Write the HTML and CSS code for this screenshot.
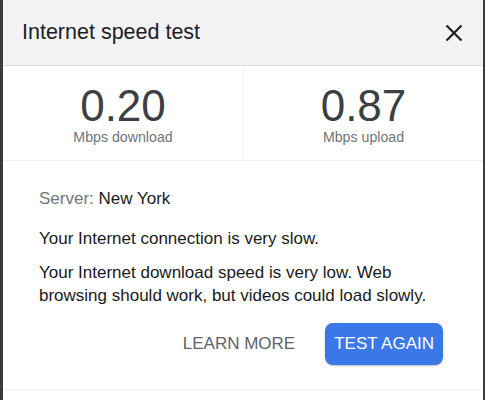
FILE: index.html
```html
<!DOCTYPE html>
<html>
<head>
<meta charset="utf-8">
<link rel="stylesheet" href="styles.css">
</head>
<body>
<div class="dialog">
  <header class="head">
    <h1 class="title">Internet speed test</h1>
    <button class="close" aria-label="Close">
      <svg width="18" height="18" viewBox="0 0 18 18"><path d="M1.5 1.5 L16.5 16.5 M16.5 1.5 L1.5 16.5" stroke="#202124" stroke-width="2.2" fill="none"/></svg>
    </button>
  </header>
  <section class="stats">
    <div class="stat">
      <div class="num">0.20</div>
      <div class="unit">Mbps download</div>
    </div>
    <div class="stat">
      <div class="num">0.87</div>
      <div class="unit">Mbps upload</div>
    </div>
  </section>
  <section class="body">
    <p class="server"><span class="label">Server:</span> New York</p>
    <p class="msg">Your Internet connection is very slow.</p>
    <p class="msg">Your Internet download speed is very low. Web browsing should work, but videos could load slowly.</p>
    <div class="actions">
      <button class="btn-text">LEARN MORE</button>
      <button class="btn-primary">TEST AGAIN</button>
    </div>
  </section>
  <div class="foot"></div>
</div>
</body>
</html>
```

FILE: styles.css
```css
* { box-sizing: border-box; }
html, body { margin: 0; padding: 0; background: #fff; }
body { font-family: "Liberation Sans", Arial, sans-serif; color: #202124; }
.dialog {
  width: 485px;
  height: 400px;
  border-left: 3px solid #3a3a3a;
  border-right: 2px solid #3a3a3a;
  background: #fff;
  display: flex;
  flex-direction: column;
}
.head {
  height: 66px;
  flex: none;
  background: #f1f3f4;
  border-bottom: 1px solid #dadce0;
  display: flex;
  align-items: center;
  justify-content: space-between;
  padding: 0 20px 0 19px;
}
.title {
  margin: 0;
  font-weight: 400;
  font-size: 21.5px;
  color: #202124;
}
.close {
  border: 0;
  background: none;
  padding: 0;
  width: 18px;
  height: 18px;
  display: flex;
}
.stats {
  display: grid;
  grid-template-columns: 240px 1fr;
  height: 95px;
  flex: none;
  border-bottom: 1px solid #f1f1f1;
}
.stat {
  display: flex;
  flex-direction: column;
  align-items: center;
  padding-top: 16px;
}
.stat + .stat { border-left: 1px solid #eeeeee; }
.num {
  font-size: 44px;
  line-height: 48px;
  color: #3c4043;
}
.unit {
  font-size: 14.2px;
  line-height: 14px;
  color: #70757a;
}
.body {
  padding: 26px 36px 0 36px;
  flex: 1;
}
.body p {
  margin: 0;
  font-size: 17px;
  line-height: 23px;
  color: #1a1a1a;
}
.body p.server { margin-bottom: 17px; }
.label { color: #70757a; }
.body p.msg { margin-bottom: 11px; }
.actions {
  display: flex;
  justify-content: flex-end;
  align-items: center;
  gap: 30px;
  margin-top: 16px;
  padding-right: 4px;
}
.btn-text {
  border: 0;
  background: none;
  font-family: inherit;
  font-size: 17px;
  color: #5f6368;
  padding: 0;
}
.btn-primary {
  border: 0;
  background: #3b78e7;
  color: #fff;
  font-family: inherit;
  font-size: 17px;
  border-radius: 8px;
  height: 42px;
  padding: 0 9px;
  box-shadow: 0 1px 2px rgba(0,0,0,0.25);
}
.foot { height: 11px; flex: none; border-top: 1px solid #eeeeee; }
```
